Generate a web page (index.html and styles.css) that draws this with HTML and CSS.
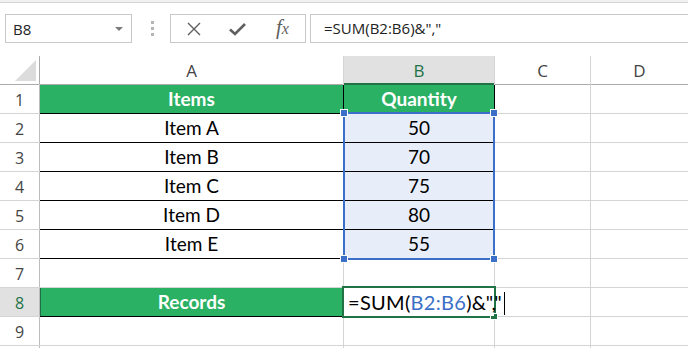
FILE: index.html
```html
<!DOCTYPE html>
<html lang="en">
<head>
    <meta charset="UTF-8">
    <title>Sheet - SUM with separator</title>
    <link rel="stylesheet" href="styles.css">
</head>
<body>
    <div class="top-strip"></div>

    <!-- Name box + formula bar -->
    <div class="toolbar">
        <div class="name-box">
            <span>B8</span>
            <span class="caret"></span>
        </div>
        <div class="grip"><i></i><i></i><i></i></div>
        <div class="fx-buttons">
            <svg class="btn" width="30" height="20" viewBox="0 0 30 20">
                <path d="M9 4 L21 16 M21 4 L9 16" stroke="#5f5f5f" stroke-width="1.4" fill="none"/>
            </svg>
            <svg class="btn" width="30" height="20" viewBox="0 0 30 20">
                <path d="M7 10.5 L12 15 L22 5" stroke="#5f5f5f" stroke-width="2.6" fill="none"/>
            </svg>
            <span class="fx">f<span class="fx-x">x</span></span>
        </div>
        <div class="formula">=SUM(B2:B6)&amp;","</div>
    </div>

    <!-- Worksheet -->
    <div class="sheet-wrap">
        <div class="sheet">
            <div class="corner">
                <svg width="39" height="28" viewBox="0 0 39 28"><polygon points="15,25 36,25 36,4" fill="#dcdcdc"/></svg>
            </div>
            <div class="col-head">A</div>
            <div class="col-head active">B</div>
            <div class="col-head">C</div>
            <div class="col-head">D</div>

            <div class="row-head">1</div>
            <div class="cell head edge-b edge-r">Items</div>
            <div class="cell head edge-r">Quantity</div>
            <div class="cell"></div>
            <div class="cell"></div>

            <div class="row-head">2</div>
            <div class="cell edge-b">Item A</div>
            <div class="cell sel edge-b">50</div>
            <div class="cell"></div>
            <div class="cell"></div>

            <div class="row-head">3</div>
            <div class="cell edge-b">Item B</div>
            <div class="cell sel edge-b">70</div>
            <div class="cell"></div>
            <div class="cell"></div>

            <div class="row-head">4</div>
            <div class="cell edge-b">Item C</div>
            <div class="cell sel edge-b">75</div>
            <div class="cell"></div>
            <div class="cell"></div>

            <div class="row-head">5</div>
            <div class="cell edge-b">Item D</div>
            <div class="cell sel edge-b">80</div>
            <div class="cell"></div>
            <div class="cell"></div>

            <div class="row-head">6</div>
            <div class="cell edge-b">Item E</div>
            <div class="cell sel">55</div>
            <div class="cell"></div>
            <div class="cell"></div>

            <div class="row-head">7</div>
            <div class="cell"></div>
            <div class="cell"></div>
            <div class="cell"></div>
            <div class="cell"></div>

            <div class="row-head active">8</div>
            <div class="cell head edge-b row-sel">Records</div>
            <div class="cell editing">=SUM(<span class="ref">B2:B6</span>)&amp;","<span class="cursor"></span></div>
            <div class="cell"></div>
            <div class="cell"></div>

            <div class="row-head">9</div>
            <div class="cell"></div>
            <div class="cell"></div>
            <div class="cell"></div>
            <div class="cell"></div>

            <div class="row-head"></div>
            <div class="cell"></div>
            <div class="cell"></div>
            <div class="cell"></div>
            <div class="cell"></div>
        </div>

        <!-- range highlight B2:B6 -->
        <div class="range">
            <i class="h tl"></i><i class="h tr"></i><i class="h bl"></i><i class="h br"></i>
        </div>
        <!-- active cell B8 -->
        <div class="active-cell"><i class="fill"></i></div>
    </div>
</body>
</html>
```

FILE: styles.css
```css
* { margin: 0; padding: 0; box-sizing: border-box; }

body {
    width: 688px;
    height: 348px;
    overflow: hidden;
    background: #fff;
    font-family: Lato, 'Liberation Sans', sans-serif;
    color: #000;
}

.top-strip {
    height: 3px;
    background: #f1f1f1;
    border-bottom: 1px solid #d6d6d6;
}

/* Formula bar row */
.toolbar {
    display: flex;
    align-items: center;
    height: 29px;
    margin: 11px 0 13px 5px;
    font-family: 'Open Sans', sans-serif;
    font-size: 15px;
    color: #222;
}

.name-box {
    width: 127px;
    height: 29px;
    border: 1px solid #c8c8c8;
    display: flex;
    align-items: center;
    justify-content: space-between;
    padding: 0 8px 0 7px;
}

.caret {
    width: 0;
    height: 0;
    border-left: 4px solid transparent;
    border-right: 4px solid transparent;
    border-top: 4px solid #7a7a7a;
}

.grip {
    width: 38px;
    display: flex;
    flex-direction: column;
    align-items: center;
    gap: 3px;
    padding-left: 2px;
}

.grip i {
    width: 3px;
    height: 3px;
    background: #b5b5b5;
}

.fx-buttons {
    width: 136px;
    height: 29px;
    border: 1px solid #c8c8c8;
    display: flex;
    align-items: center;
    padding-left: 8px;
    gap: 14px;
}

.fx {
    font-family: 'Liberation Serif', serif;
    font-style: italic;
    font-size: 21px;
    color: #5f5f5f;
    margin-left: 9px;
    margin-top: -2px;
}

.fx-x {
    font-size: 16px;
}

.formula {
    flex: 1;
    height: 29px;
    margin-left: 4px;
    margin-right: -4px;
    border: 1px solid #c8c8c8;
    padding: 3px 0 0 13px;
}

/* Grid */
.sheet-wrap {
    position: relative;
}

.sheet {
    display: grid;
    grid-template-columns: 39px 303px 150px 95px 97px;
    grid-auto-rows: 28px;
    gap: 1px;
    background: #d4d4d4;
}

.corner, .col-head, .row-head {
    background: #fff;
    font-family: 'Open Sans', sans-serif;
    color: #444;
    text-align: center;
}

.corner {
    box-shadow: 0 1px 0 #ababab, 1px 0 0 #ababab;
}

.col-head {
    font-size: 17px;
    line-height: 25px;
    padding-top: 2px;
    box-shadow: 0 1px 0 #ababab;
}

.col-head.active {
    background: #e1e1e1;
    color: #217346;
    box-shadow: inset 0 -1px 0 #217346, 0 1px 0 #217346;
}

.row-head {
    font-size: 16px;
    line-height: 28px;
    padding-top: 1px;
    box-shadow: 1px 0 0 #bcbcbc;
}

.row-head.active {
    background: #e1e1e1;
    color: #217346;
}

.cell {
    background: #fff;
    font-size: 19px;
    line-height: 28px;
    text-align: center;
    white-space: nowrap;
}

.cell.head {
    background: #2ab163;
    color: #fff;
    font-weight: 700;
}

.cell.sel {
    background: #e8eef9;
}

.edge-b { box-shadow: 0 1px 0 #000; }
.edge-r { box-shadow: 1px 0 0 #000; }
.edge-b.edge-r { box-shadow: 0 1px 0 #000, 1px 0 0 #000, 1px 1px 0 #000; }
.row-sel { box-shadow: 0 1px 0 #000, inset 1px 0 0 #1e7145; }

.cell.editing {
    position: relative;
    z-index: 3;
    text-align: left;
    padding-left: 4px;
    font-size: 20px;
    letter-spacing: 0.3px;
    overflow: visible;
}

.ref {
    color: #3a6fc8;
}

.cursor {
    display: inline-block;
    width: 1px;
    height: 23px;
    background: #000;
    margin-left: 2px;
    vertical-align: -5px;
}

/* Overlays */
.range {
    position: absolute;
    left: 343px;
    top: 56px;
    width: 152px;
    height: 148px;
    border: 2px solid #3c70c8;
    z-index: 2;
}

.h {
    position: absolute;
    width: 6px;
    height: 6px;
    background: #3c70c8;
    outline: 1px solid #fff;
}

.h.tl { left: -4px; top: -4px; }
.h.tr { right: -4px; top: -4px; }
.h.bl { left: -4px; bottom: -4px; }
.h.br { right: -4px; bottom: -4px; }

.active-cell {
    position: absolute;
    left: 342px;
    top: 230px;
    width: 154px;
    height: 32px;
    border: 2px solid #217346;
    z-index: 2;
}

.active-cell .fill {
    position: absolute;
    right: -3px;
    bottom: -3px;
    width: 6px;
    height: 5px;
    background: #217346;
    outline: 1px solid #fff;
}
```
